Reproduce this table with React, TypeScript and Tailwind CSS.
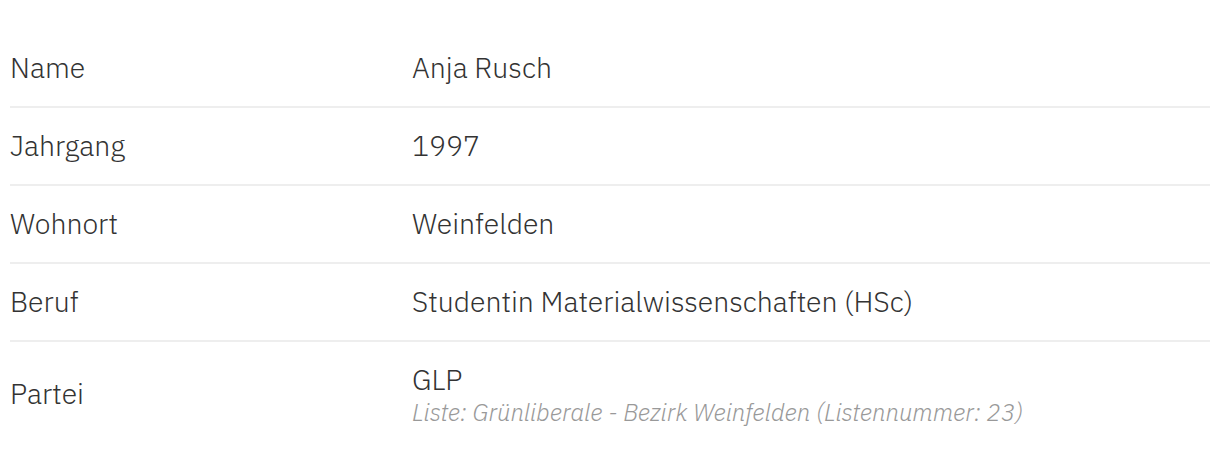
import React from 'react';

const rows = [
  { label: 'Name', value: 'Anja Rusch' },
  { label: 'Jahrgang', value: '1997' },
  { label: 'Wohnort', value: 'Weinfelden' },
  { label: 'Beruf', value: 'Studentin Materialwissenschaften (HSc)' },
];

const App: React.FC = () => {
  return (
    <div className="min-h-screen bg-white px-[10px] pt-[30px] text-[#333] font-['IBM_Plex_Sans','Noto_Sans',sans-serif] font-light text-[28.4px] leading-[36px]">
      {rows.map((row) => (
        <div key={row.label} className="flex items-center border-b-2 border-[#eeeeee] py-[20px]">
          <div className="w-[402px] shrink-0">{row.label}</div>
          <div>{row.value}</div>
        </div>
      ))}
      <div className="flex items-center pt-[20px] pb-[24px]">
        <div className="w-[402px] shrink-0">Partei</div>
        <div>
          <div>GLP</div>
          <div className="text-[24.1px] leading-[28px] italic text-[#999]">
            Liste: Grünliberale - Bezirk Weinfelden (Listennummer: 23)
          </div>
        </div>
      </div>
    </div>
  );
};

export default App;
